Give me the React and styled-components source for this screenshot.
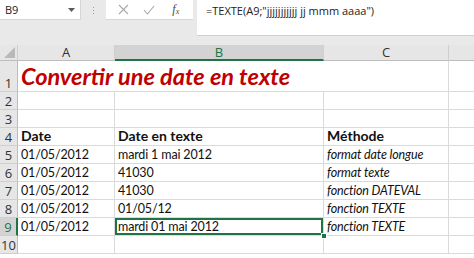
import React from 'react';
import styled, { createGlobalStyle } from 'styled-components';

const GlobalStyle = createGlobalStyle`
	* { box-sizing: border-box; }
	body {
		margin: 0;
		background: #ffffff;
		font-family: "Open Sans", "Liberation Sans", sans-serif;
		overflow: hidden;
	}
`;

const GREEN = '#217346';

const rows = [
	{ n: 1, tall: true, a: 'Convertir une date en texte', title: true },
	{ n: 2 },
	{ n: 3 },
	{ n: 4, a: 'Date', b: 'Date en texte', c: 'Méthode', bold: true },
	{ n: 5, a: '01/05/2012', b: 'mardi 1 mai 2012', c: 'format date longue' },
	{ n: 6, a: '01/05/2012', b: '41030', c: 'format texte' },
	{ n: 7, a: '01/05/2012', b: '41030', c: 'fonction DATEVAL' },
	{ n: 8, a: '01/05/2012', b: '01/05/12', c: 'fonction TEXTE' },
	{ n: 9, a: '01/05/2012', b: 'mardi 01 mai 2012', c: 'fonction TEXTE', active: true },
	{ n: 10 },
];

const App = () => (
	<>
		<GlobalStyle />
		<Toolbar>
			<LeftTools>
				<NameBox>
					<span>B9</span>
					<Caret viewBox="0 0 7 4">
						<path d="M0 0h7L3.5 4z" fill="#5a5a5a" />
					</Caret>
				</NameBox>
				<Grip>
					<Dot />
					<Dot />
					<Dot />
				</Grip>
				<Buttons>
					<IconSlot>
						<svg width="11" height="11" viewBox="0 0 11 11">
							<path d="M1 1l9 9M10 1l-9 9" stroke="#a8a8a8" strokeWidth="1.1" fill="none" />
						</svg>
					</IconSlot>
					<IconSlot>
						<svg width="12" height="10" viewBox="0 0 12 10">
							<path d="M1 5l3.5 4L11 1" stroke="#a8a8a8" strokeWidth="1.1" fill="none" />
						</svg>
					</IconSlot>
					<Fx>
						f<sub>x</sub>
					</Fx>
				</Buttons>
			</LeftTools>
			<FormulaBar>=TEXTE(A9;"jjjjjjjjjjj jj mmm aaaa")</FormulaBar>
		</Toolbar>
		<Sheet>
			<Corner>
				<svg width="11" height="11" viewBox="0 0 11 11">
					<path d="M11 0v11H0z" fill="#b9b9b9" />
				</svg>
			</Corner>
			<ColHead>A</ColHead>
			<ColHead $selected>B</ColHead>
			<ColHead>C</ColHead>
			<ColHead $last />
			{rows.map((r) => (
				<React.Fragment key={r.n}>
					<RowHead $selected={r.active} $tall={r.tall}>{r.n}</RowHead>
					{r.title ? (
						<TitleCell>{r.a}</TitleCell>
					) : (
						<Cell $bold={r.bold}>{r.a}</Cell>
					)}
					{!r.title && (
						<Cell $bold={r.bold} $active={r.active}>
							{r.b}
							{r.active && <Handle />}
						</Cell>
					)}
					<Cell $bold={r.bold} $italic={!r.bold && !!r.c}>{r.c}</Cell>
					<Cell $last />
				</React.Fragment>
			))}
		</Sheet>
	</>
);

export default App;

const Toolbar = styled.div`
	display: flex;
	height: 45px;
	background: #e9e9e9;
	align-items: flex-start;
`;

const LeftTools = styled.div`
	display: flex;
	align-items: stretch;
	height: 20px;
	width: 197px;
	flex-shrink: 0;
`;

const NameBox = styled.div`
	width: 81px;
	background: #ffffff;
	border-right: 1px solid #d6d6d6;
	border-bottom: 1px solid #d6d6d6;
	display: flex;
	align-items: center;
	justify-content: space-between;
	padding: 0 5px 0 5px;
	font-size: 11px;
	color: #222;
`;

const Caret = styled.svg`
	width: 7px;
	height: 4px;
`;

const Grip = styled.div`
	width: 25px;
	display: flex;
	flex-direction: column;
	align-items: center;
	justify-content: center;
	gap: 2px;
`;

const Dot = styled.span`
	width: 1px;
	height: 1px;
	background: #9a9a9a;
`;

const Buttons = styled.div`
	width: 87px;
	background: #ffffff;
	border-bottom: 1px solid #d6d6d6;
	display: flex;
	align-items: center;
	justify-content: space-around;
	padding: 0 4px;
`;

const IconSlot = styled.span`
	display: flex;
	align-items: center;
	justify-content: center;
	width: 20px;
`;

const Fx = styled.span`
	font-family: "Liberation Serif", serif;
	font-style: italic;
	font-size: 12px;
	color: #4a4a4a;
	width: 20px;
	text-align: center;

	sub {
		font-size: 8px;
		vertical-align: -1px;
	}
`;

const FormulaBar = styled.div`
	flex: 1;
	height: 36px;
	background: #ffffff;
	border-bottom: 1px solid #cfcfcf;
	padding: 3px 0 0 9px;
	font-size: 11px;
	color: #222;
	white-space: nowrap;
`;

const Sheet = styled.div`
	display: grid;
	grid-template-columns: 18px 97px 209px 125px 1fr;
	grid-template-rows: 16px 31px repeat(9, 18px);
`;

const Corner = styled.div`
	background: #e6e6e6;
	border-right: 1px solid #cfcfcf;
	border-bottom: 1px solid #bdbdbd;
	display: flex;
	align-items: flex-end;
	justify-content: flex-end;
	padding: 0 2px 2px 0;
`;

const ColHead = styled.div`
	background: ${(p) => (p.$selected ? '#d3d3d3' : '#e6e6e6')};
	border-right: ${(p) => (p.$last ? 'none' : '1px solid #cfcfcf')};
	border-bottom: ${(p) => (p.$selected ? `2px solid ${GREEN}` : '1px solid #bdbdbd')};
	color: ${(p) => (p.$selected ? GREEN : '#333')};
	font-size: 13px;
	display: flex;
	align-items: center;
	justify-content: center;
	line-height: 1;
`;

const RowHead = styled.div`
	background: ${(p) => (p.$selected ? '#d3d3d3' : '#e6e6e6')};
	border-right: ${(p) => (p.$selected ? `2px solid ${GREEN}` : '1px solid #bdbdbd')};
	border-bottom: 1px solid #cfcfcf;
	color: ${(p) => (p.$selected ? GREEN : '#333')};
	font-size: 13px;
	display: flex;
	align-items: flex-end;
	justify-content: center;
	padding-bottom: 1px;
	line-height: 1;
`;

const Cell = styled.div`
	position: relative;
	border-right: ${(p) => (p.$last ? 'none' : '1px solid #dadada')};
	border-bottom: 1px solid #dadada;
	font-family: Lato, "Liberation Sans", sans-serif;
	font-size: ${(p) => (p.$bold ? '14px' : '12.5px')};
	font-weight: ${(p) => (p.$bold ? 700 : 400)};
	font-style: ${(p) => (p.$italic ? 'italic' : 'normal')};
	letter-spacing: ${(p) => (p.$bold ? '0' : '-0.15px')};
	color: #111;
	display: flex;
	align-items: flex-end;
	padding: 0 0 2px 3px;
	white-space: nowrap;
	line-height: 1;
	${(p) => p.$active && `
		box-shadow: inset 0 0 0 2px ${GREEN};
	`}
`;

const TitleCell = styled.div`
	grid-column: 2 / span 2;
	border-bottom: 1px solid #dadada;
	font-family: Lato, "Liberation Sans", sans-serif;
	font-size: 23.5px;
	font-weight: 700;
	font-style: italic;
	color: #c00000;
	display: flex;
	align-items: flex-end;
	padding: 0 0 3px 3px;
	white-space: nowrap;
	line-height: 1;
`;

const Handle = styled.span`
	position: absolute;
	right: -4px;
	bottom: -4px;
	width: 6px;
	height: 6px;
	background: ${GREEN};
	border: 1px solid #ffffff;
	z-index: 2;
`;
